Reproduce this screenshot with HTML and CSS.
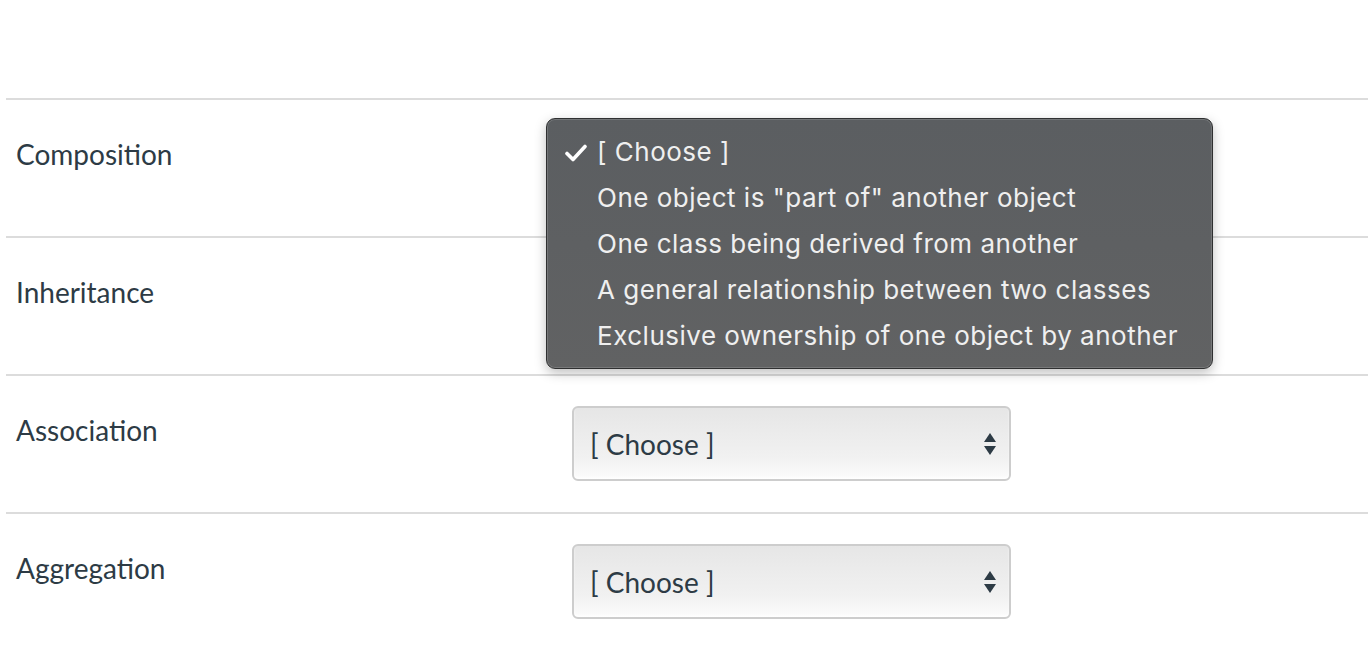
FILE: index.html
```html
<!DOCTYPE html>
<html lang="en">
<head>
    <meta charset="UTF-8">
    <meta name="viewport" content="width=device-width, initial-scale=1.0">
    <title>Matching question</title>
    <link rel="stylesheet" href="styles.css">
</head>
<body>
    <main class="question">
        <div class="answers">
            <div class="answer-row">
                <div class="answer-label">Composition</div>
                <div class="select-box">
                    <span class="select-text">[ Choose ]</span>
                    <svg class="select-arrows" width="14" height="26" viewBox="0 0 14 26"><path d="M7 2 L13 11 L1 11 Z"/><path d="M1 15 L13 15 L7 24 Z"/></svg>
                </div>
                <ul class="option-menu">
                    <li class="option selected">
                        <svg class="check" width="22" height="18" viewBox="0 0 22 18"><path d="M2 9.5 L8 15.5 L20 2.5"/></svg>
                        [ Choose ]
                    </li>
                    <li class="option">One object is "part of" another object</li>
                    <li class="option">One class being derived from another</li>
                    <li class="option">A general relationship between two classes</li>
                    <li class="option">Exclusive ownership of one object by another</li>
                </ul>
            </div>
            <div class="answer-row">
                <div class="answer-label">Inheritance</div>
                <div class="select-box">
                    <span class="select-text">[ Choose ]</span>
                    <svg class="select-arrows" width="14" height="26" viewBox="0 0 14 26"><path d="M7 2 L13 11 L1 11 Z"/><path d="M1 15 L13 15 L7 24 Z"/></svg>
                </div>
            </div>
            <div class="answer-row">
                <div class="answer-label">Association</div>
                <div class="select-box">
                    <span class="select-text">[ Choose ]</span>
                    <svg class="select-arrows" width="14" height="26" viewBox="0 0 14 26"><path d="M7 2 L13 11 L1 11 Z"/><path d="M1 15 L13 15 L7 24 Z"/></svg>
                </div>
            </div>
            <div class="answer-row">
                <div class="answer-label">Aggregation</div>
                <div class="select-box">
                    <span class="select-text">[ Choose ]</span>
                    <svg class="select-arrows" width="14" height="26" viewBox="0 0 14 26"><path d="M7 2 L13 11 L1 11 Z"/><path d="M1 15 L13 15 L7 24 Z"/></svg>
                </div>
            </div>
        </div>
    </main>
</body>
</html>
```

FILE: styles.css
```css
* {
    margin: 0;
    padding: 0;
    box-sizing: border-box;
}

body {
    background: #fff;
    font-family: Lato, "Open Sans", sans-serif;
    color: #2d3b45;
    overflow: hidden;
}

.question {
    padding-top: 98px;
    padding-left: 6px;
}

.answer-row {
    position: relative;
    display: flex;
    align-items: flex-start;
    height: 138px;
    border-top: 2px solid #dcdcdc;
}

.answer-label {
    width: 566px;
    padding-left: 10px;
    padding-top: 36px;
    font-size: 28px;
    line-height: 36px;
}

.select-box {
    display: flex;
    align-items: center;
    justify-content: space-between;
    width: 439px;
    height: 75px;
    margin-top: 30px;
    padding: 0 12px 0 16px;
    border: 2px solid #cdcdcd;
    border-radius: 6px;
    background: linear-gradient(#e6e6e6, #f1f1f1 70%, #fcfcfc);
    box-shadow: inset 0 -2px 2px rgba(255,255,255,0.8);
}

.select-text {
    font-size: 28px;
    color: #2d3b45;
}

.select-arrows {
    fill: #2d3b45;
}

.option-menu {
    position: absolute;
    top: 18px;
    left: 540px;
    z-index: 10;
    width: 667px;
    height: 251px;
    padding: 10px 0 9px;
    list-style: none;
    background: linear-gradient(#5b5e61, #616263);
    border: 1px solid #2f3031;
    border-radius: 9px;
    box-shadow: 0 0 0 1px rgba(255,255,255,0.15) inset, 0 4px 12px rgba(0,0,0,0.25);
    font-family: Inter, "Open Sans", sans-serif;
}

.option {
    position: relative;
    height: 46px;
    line-height: 46px;
    padding-left: 50px;
    font-size: 26px;
    letter-spacing: 0.5px;
    color: #efefef;
}

.check {
    position: absolute;
    left: 18px;
    top: 15px;
    fill: none;
    stroke: #fff;
    stroke-width: 3.6;
    stroke-linecap: round;
    stroke-linejoin: round;
}
```
